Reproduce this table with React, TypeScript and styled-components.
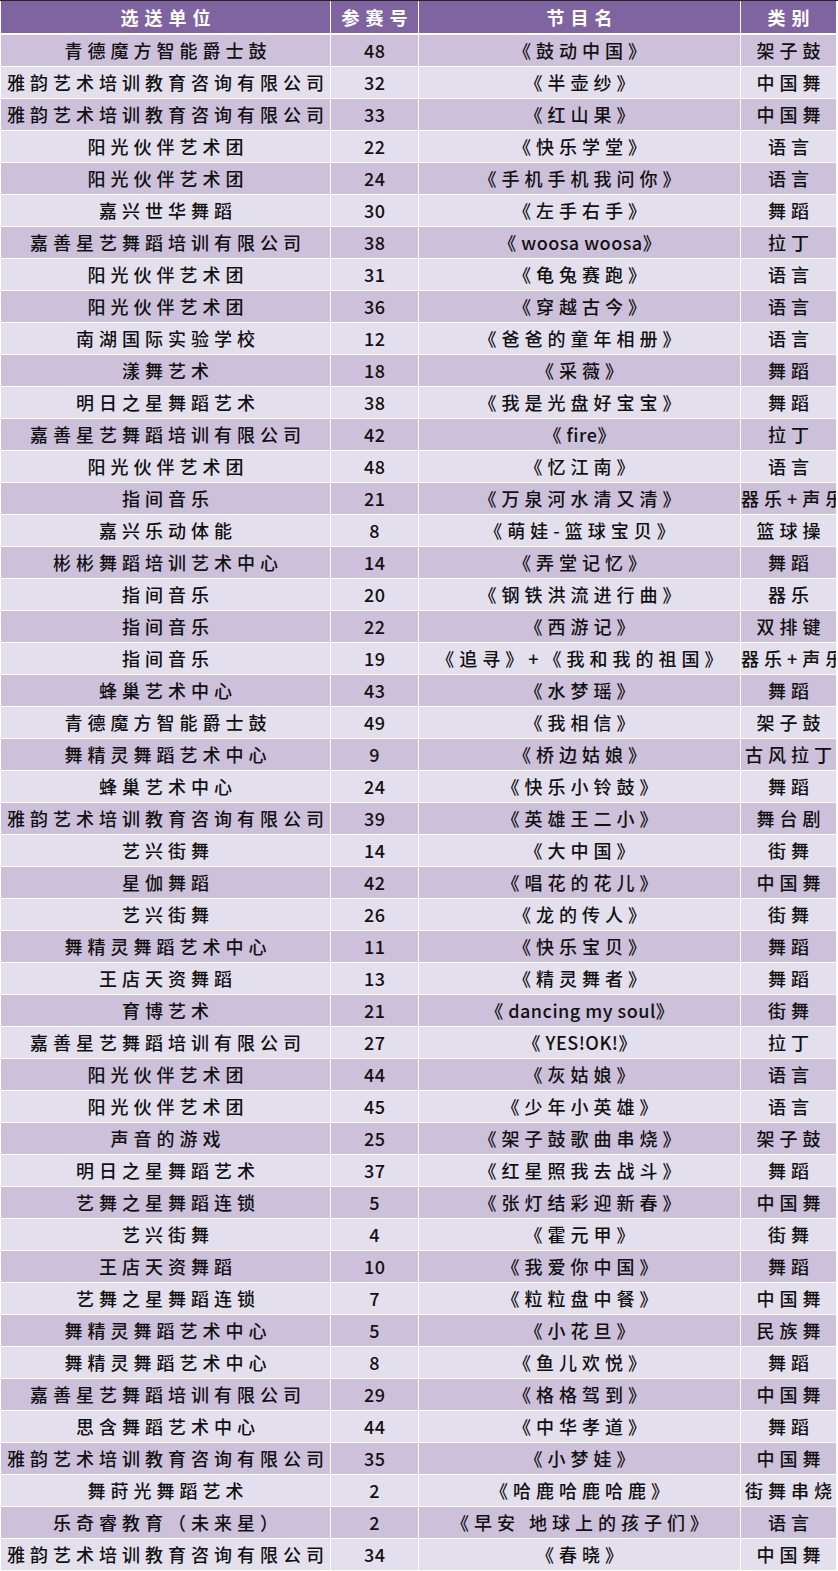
import React from "react";
import styled, { createGlobalStyle } from "styled-components";

const GlobalStyle = createGlobalStyle`
  html, body {
    margin: 0;
    padding: 0;
    background: #ffffff;
  }
  body {
    font-family: "Noto Sans CJK SC", "Noto Sans", sans-serif;
  }
`;

type Row = [string, string, string, string];

const rows: Row[] = [
  ["青德魔方智能爵士鼓", "48", "《鼓动中国》", "架子鼓"],
  ["雅韵艺术培训教育咨询有限公司", "32", "《半壶纱》", "中国舞"],
  ["雅韵艺术培训教育咨询有限公司", "33", "《红山果》", "中国舞"],
  ["阳光伙伴艺术团", "22", "《快乐学堂》", "语言"],
  ["阳光伙伴艺术团", "24", "《手机手机我问你》", "语言"],
  ["嘉兴世华舞蹈", "30", "《左手右手》", "舞蹈"],
  ["嘉善星艺舞蹈培训有限公司", "38", "《woosa woosa》", "拉丁"],
  ["阳光伙伴艺术团", "31", "《龟兔赛跑》", "语言"],
  ["阳光伙伴艺术团", "36", "《穿越古今》", "语言"],
  ["南湖国际实验学校", "12", "《爸爸的童年相册》", "语言"],
  ["漾舞艺术", "18", "《采薇》", "舞蹈"],
  ["明日之星舞蹈艺术", "38", "《我是光盘好宝宝》", "舞蹈"],
  ["嘉善星艺舞蹈培训有限公司", "42", "《fire》", "拉丁"],
  ["阳光伙伴艺术团", "48", "《忆江南》", "语言"],
  ["指间音乐", "21", "《万泉河水清又清》", "器乐+声乐"],
  ["嘉兴乐动体能", "8", "《萌娃-篮球宝贝》", "篮球操"],
  ["彬彬舞蹈培训艺术中心", "14", "《弄堂记忆》", "舞蹈"],
  ["指间音乐", "20", "《钢铁洪流进行曲》", "器乐"],
  ["指间音乐", "22", "《西游记》", "双排键"],
  ["指间音乐", "19", "《追寻》+《我和我的祖国》", "器乐+声乐"],
  ["蜂巢艺术中心", "43", "《水梦瑶》", "舞蹈"],
  ["青德魔方智能爵士鼓", "49", "《我相信》", "架子鼓"],
  ["舞精灵舞蹈艺术中心", "9", "《桥边姑娘》", "古风拉丁"],
  ["蜂巢艺术中心", "24", "《快乐小铃鼓》", "舞蹈"],
  ["雅韵艺术培训教育咨询有限公司", "39", "《英雄王二小》", "舞台剧"],
  ["艺兴街舞", "14", "《大中国》", "街舞"],
  ["星伽舞蹈", "42", "《唱花的花儿》", "中国舞"],
  ["艺兴街舞", "26", "《龙的传人》", "街舞"],
  ["舞精灵舞蹈艺术中心", "11", "《快乐宝贝》", "舞蹈"],
  ["王店天资舞蹈", "13", "《精灵舞者》", "舞蹈"],
  ["育博艺术", "21", "《dancing my soul》", "街舞"],
  ["嘉善星艺舞蹈培训有限公司", "27", "《YES!OK!》", "拉丁"],
  ["阳光伙伴艺术团", "44", "《灰姑娘》", "语言"],
  ["阳光伙伴艺术团", "45", "《少年小英雄》", "语言"],
  ["声音的游戏", "25", "《架子鼓歌曲串烧》", "架子鼓"],
  ["明日之星舞蹈艺术", "37", "《红星照我去战斗》", "舞蹈"],
  ["艺舞之星舞蹈连锁", "5", "《张灯结彩迎新春》", "中国舞"],
  ["艺兴街舞", "4", "《霍元甲》", "街舞"],
  ["王店天资舞蹈", "10", "《我爱你中国》", "舞蹈"],
  ["艺舞之星舞蹈连锁", "7", "《粒粒盘中餐》", "中国舞"],
  ["舞精灵舞蹈艺术中心", "5", "《小花旦》", "民族舞"],
  ["舞精灵舞蹈艺术中心", "8", "《鱼儿欢悦》", "舞蹈"],
  ["嘉善星艺舞蹈培训有限公司", "29", "《格格驾到》", "中国舞"],
  ["思含舞蹈艺术中心", "44", "《中华孝道》", "舞蹈"],
  ["雅韵艺术培训教育咨询有限公司", "35", "《小梦娃》", "中国舞"],
  ["舞莳光舞蹈艺术", "2", "《哈鹿哈鹿哈鹿》", "街舞串烧"],
  ["乐奇睿教育（未来星）", "2", "《早安 地球上的孩子们》", "语言"],
  ["雅韵艺术培训教育咨询有限公司", "34", "《春晓》", "中国舞"],
];

const headers = ["选送单位", "参赛号", "节目名", "类别"];

const Page = styled.div`
  width: 838px;
  height: 1571px;
  background: #ffffff;
  border-top: 1px solid #262626;
  box-sizing: border-box;
  overflow: hidden;
`;

const Table = styled.div`
  display: grid;
  grid-template-columns: 329px 87px 321px 95px;
  column-gap: 1px;
  row-gap: 1px;
  margin-left: 1px;
  width: 835px;
`;

const HeaderCell = styled.div`
  height: 32px;
  margin-bottom: 1px;
  background: #8064a2;
  color: #ffffff;
  font-weight: 700;
  font-size: 18px;
  letter-spacing: 6px;
  line-height: 32px;
  text-align: center;
  white-space: nowrap;
`;

const Cell = styled.div<{ $dark: boolean }>`
  height: 31px;
  background: ${(p) => (p.$dark ? "#ccc0da" : "#e4dfec")};
  color: #111111;
  font-weight: 500;
  font-size: 18px;
  letter-spacing: 5px;
  line-height: 31px;
  text-align: center;
  white-space: nowrap;
  overflow: hidden;
`;

const Label = styled.span<{ $trail: number }>`
  margin-right: -${(p) => p.$trail}px;
`;

const Latin = styled.span`
  letter-spacing: 0.5px;
`;

const latinRe = /([A-Za-z0-9!]+(?: [A-Za-z0-9!]+)*)/;

function renderText(text: string) {
  const parts = text.split(latinRe).filter((s) => s.length > 0);
  return parts.map((p, i) =>
    latinRe.test(p) && /^[A-Za-z0-9! ]+$/.test(p) ? (
      <Latin key={i}>{p}</Latin>
    ) : (
      <React.Fragment key={i}>{p}</React.Fragment>
    )
  );
}

export default function App() {
  return (
    <>
      <GlobalStyle />
      <Page>
        <Table>
          {headers.map((h) => (
            <HeaderCell key={h}>
              <Label $trail={6}>{h}</Label>
            </HeaderCell>
          ))}
          {rows.map((r, i) =>
            r.map((c, j) => {
              const endsLatin = /[A-Za-z0-9!]$/.test(c);
              return (
                <Cell key={`${i}-${j}`} $dark={i % 2 === 0}>
                  <Label $trail={endsLatin ? 0.5 : 5}>{renderText(c)}</Label>
                </Cell>
              );
            })
          )}
        </Table>
      </Page>
    </>
  );
}
